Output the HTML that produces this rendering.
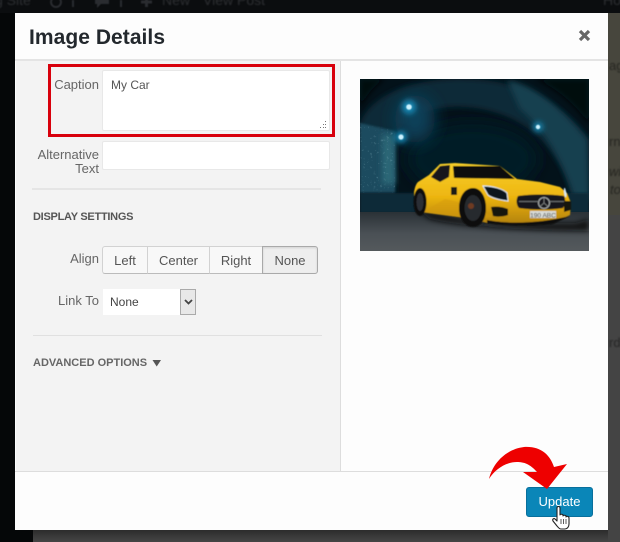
<!DOCTYPE html>
<html><head><meta charset="utf-8"><style>
html,body{margin:0;padding:0;width:620px;height:542px;overflow:hidden;background:#050708}
body{position:relative;font-family:"Liberation Sans",sans-serif;color:#555}
div,span{position:absolute;box-sizing:border-box;white-space:nowrap}
.f{filter:blur(.35px)}
.g{filter:blur(.7px);position:absolute;font-size:14px;line-height:16px;color:#2e3033}
.l{text-align:right;font-size:13px;color:#666;line-height:14px}
.b{top:246px;height:28px;background:#f8f8f8;border:1px solid #d2d2d2;border-bottom-color:#bbb;text-align:center;font-size:13px;line-height:27px;color:#555}
.h{font-size:11px;font-weight:bold;color:#555;line-height:14px}
</style></head><body>
<div style="left:0;top:0;width:620px;height:13px;background:#0b0d0f"></div>
<div class="g" style="left:-5px;top:-8px">g Site</div>
<div class="g" style="left:162px;top:-8px">New</div>
<div class="g" style="left:203px;top:-8px">View Post</div>
<div class="g" style="left:603px;top:-8px">Ho</div>
<svg style="position:absolute;left:48px;top:-3px;filter:blur(.5px)" width="110" height="16"><circle cx="8" cy="5" r="5" fill="none" stroke="#2a2c30" stroke-width="2"/><rect x="24" y="3" width="2" height="7" fill="#2a2c30"/><path d="M47 0h14v7h-8l-4 4v-4h-2z" fill="#2a2c30"/><rect x="72" y="3" width="2" height="7" fill="#2a2c30"/><path d="M93 5h11M98.500 0v10" stroke="#2a2c30" stroke-width="3"/></svg>
<div style="left:33px;top:530px;width:587px;height:12px;background:linear-gradient(#2c2c2c,#454545)"></div>
<div style="left:608px;top:13px;width:12px;height:202px;background:#47463d"></div>
<div style="left:608px;top:215px;width:12px;height:327px;background:#444"></div>
<div class="g" style="left:609px;top:58px;font-size:13px;color:#252520">ag</div>
<div class="g" style="left:609px;top:134px;font-size:13px;color:#252520">rn</div>
<div class="g" style="left:609px;top:164px;font-size:13px;color:#252520;font-style:italic">wil</div>
<div class="g" style="left:610px;top:182px;font-size:13px;color:#252520;font-style:italic">to</div>
<div class="g" style="left:609px;top:335px;font-size:13px;color:#252525">rd</div>

<div style="left:15px;top:13px;width:593px;height:517px;background:#fdfdfd"></div>
<div style="left:16px;top:60px;width:325px;height:411px;background:#f3f3f3"></div>
<div style="left:340px;top:60px;width:1px;height:411px;background:#ddd"></div>
<div style="left:15px;top:59px;width:593px;height:2px;background:#e4e4e4"></div>
<div style="left:15px;top:471px;width:593px;height:1px;background:#ddd"></div>

<div class="f" style="left:29px;top:24px;font-size:21px;line-height:28px;font-weight:bold;color:#23282d;letter-spacing:.05px">Image Details</div>
<svg style="position:absolute;left:578px;top:29px" width="13" height="13" viewBox="0 0 13 13"><path d="M2 2l9 9M11 2l-9 9" stroke="#666" stroke-width="3.200"/></svg>

<div style="left:48px;top:64px;width:287px;height:73px;border:3px solid #d8000c"></div>
<div class="l f" style="left:40px;top:78px;width:59px">Caption</div>
<div style="left:102px;top:70px;width:228px;height:61px;background:#fff;border:1px solid #e8e8e8;border-radius:2px"></div>
<div class="f" style="left:111px;top:78px;font-size:12px;line-height:14px;color:#555">My Car</div>
<svg style="position:absolute;left:318px;top:120px" width="9" height="9"><path d="M7 1h1v1H7zM5 4h1v1H5zM7 4h1v1H7zM2 7h1v1H2zM5 7h1v1H5zM7 7h1v1H7z" fill="#777"/></svg>
<div class="l f" style="left:30px;top:148px;width:69px;line-height:13.500px">Alternative<br>Text</div>
<div style="left:102px;top:141px;width:228px;height:29px;background:#fff;border:1px solid #e8e8e8;border-radius:2px"></div>
<div style="left:32px;top:188px;width:289px;height:2px;background:#e5e5e5"></div>

<div class="h f" style="left:33px;top:210px;letter-spacing:-.27px">DISPLAY SETTINGS</div>
<div class="l f" style="left:50px;top:252px;width:49px">Align</div>
<div class="b f" style="left:102px;width:46px;border-radius:3px 0 0 3px">Left</div>
<div class="b f" style="left:147px;width:63px">Center</div>
<div class="b f" style="left:209px;width:54px">Right</div>
<div class="b f" style="left:262px;width:56px;background:#eee;border-color:#a9a9a9;border-radius:0 3px 3px 0;line-height:28px;box-shadow:inset 0 1px 2px rgba(0,0,0,.12)">None</div>

<div class="l f" style="left:40px;top:294px;width:59px">Link To</div>
<div style="left:103px;top:289px;width:78px;height:26px;background:#fff"></div>
<div class="f" style="left:110px;top:295px;font-size:12px;line-height:14px;color:#444">None</div>
<div style="left:180px;top:289px;width:16px;height:26px;background:#e8e8e8;border:1px solid #aaa"></div>
<svg style="position:absolute;left:184px;top:298px" width="9" height="8"><path d="M1 2l3.500 3.500L8 2" fill="none" stroke="#444" stroke-width="1.800"/></svg>
<div style="left:33px;top:335px;width:289px;height:1px;background:#e0e0e0"></div>
<div class="h f" style="left:33px;top:356px;color:#666">ADVANCED OPTIONS</div>
<svg style="position:absolute;left:152px;top:359px" width="10" height="8"><path d="M.5 1h8.500L4.700 7.500z" fill="#555"/></svg>

<svg style="position:absolute;left:360px;top:79px" width="229" height="172" viewBox="0 0 229 172">
<defs>
<filter id="b05" x="-20%" y="-20%" width="140%" height="140%"><feGaussianBlur stdDeviation=".45"/></filter>
<filter id="b1" x="-50%" y="-50%" width="200%" height="200%"><feGaussianBlur stdDeviation="1"/></filter>
<filter id="b3" x="-50%" y="-50%" width="200%" height="200%"><feGaussianBlur stdDeviation="3"/></filter>
<filter id="b8" x="-50%" y="-50%" width="200%" height="200%"><feGaussianBlur stdDeviation="8"/></filter>
<filter id="n" x="0" y="0" width="100%" height="100%"><feTurbulence baseFrequency=".3" numOctaves="2" seed="3"/><feColorMatrix values="0 0 0 0 .4 0 0 0 0 .66 0 0 0 0 .74 1.300 0 0 0 -.55"/></filter>
<linearGradient id="g" x1="0" y1="0" x2="0" y2="1"><stop offset="0" stop-color="#2a3136"/><stop offset=".55" stop-color="#4a5055"/><stop offset="1" stop-color="#54595c"/></linearGradient>
<linearGradient id="y" x1="0" y1="0" x2="0" y2="1"><stop offset="0" stop-color="#f7cf2a"/><stop offset=".55" stop-color="#eeb611"/><stop offset="1" stop-color="#b5830a"/></linearGradient>
<clipPath id="c"><rect width="229" height="172"/></clipPath>
<clipPath id="w"><path d="M0 44l35 6v64H0z"/></clipPath>
</defs>
<g clip-path="url(#c)">
<rect width="229" height="172" fill="#03121a"/>
<path d="M0 44C10 20 40 3 90 0c50-2 100 10 139 60v60H212C205 85 180 45 130 32 90 22 55 30 35 55v60H0z" fill="#0a2a38" filter="url(#b3)"/>
<path d="M147 1c30 5 60 35 80 60l2 60h-14C205 85 185 50 160 30z" fill="#134050" filter="url(#b3)"/>
<path d="M0 44l35 8v62H0z" fill="#1a4c5e" filter="url(#b1)"/>
<path d="M22 55h13v50H22z" fill="#2a6676" filter="url(#b3)"/>
<ellipse cx="112" cy="80" rx="65" ry="35" fill="#031a25" filter="url(#b8)"/>
<ellipse cx="55" cy="40" rx="20" ry="24" fill="#0b4058" filter="url(#b8)"/>
<path d="M0 0h25C12 8 4 20 0 30zM175 0h54v45C215 25 195 8 175 0z" fill="#010709" filter="url(#b3)"/>
<rect width="229" height="118" filter="url(#n)" clip-path="url(#w)" opacity=".75"/>
<rect y="114" width="229" height="20" fill="#0c2a37" filter="url(#b1)"/>
<rect y="133" width="229" height="39" fill="url(#g)"/>
<path d="M55 130L125 144L215 144L229 140V152C170 152 100 148 70 140z" fill="#080b0e" opacity=".9" filter="url(#b3)"/>
<circle cx="49" cy="28" r="7" fill="#1489b5" filter="url(#b3)"/><circle cx="49" cy="28" r="2.800" fill="#cdf3ff" filter="url(#b05)"/>
<circle cx="41" cy="58" r="6" fill="#1489b5" filter="url(#b3)"/><circle cx="41" cy="58" r="2.600" fill="#cdf3ff" filter="url(#b05)"/>
<circle cx="178" cy="48" r="5" fill="#1489b5" filter="url(#b3)"/><circle cx="178" cy="48" r="2.200" fill="#cdf3ff" filter="url(#b05)"/>
<g filter="url(#b05)">
<path d="M54 113C55 108 56 105 58 103L69 96L80 85L95 84L140 87L157 100L180 103L200 108L207 114L211 124L210 136L193 144L127 144L112 140L60 133C56 128 54 120 54 113Z" fill="url(#y)"/>
<path d="M71 98L80 87L90 86L89 98L80 103Z" fill="#12181c"/>
<path d="M93 87L140 87L155 100L94 99Z" fill="#090d11"/>
<path d="M85 120c15 3 30 8 48 18l-20 2-50-7z" fill="#d49a0a" opacity=".5"/>
<rect x="91" y="108" width="6" height="8" fill="#1a1a14"/>
<ellipse cx="60" cy="123" rx="6.500" ry="14" fill="#0b0c0f"/><ellipse cx="60" cy="123" rx="3.500" ry="9" fill="#2c2f34"/>
<path d="M99 129c0-12 6-20 14-20s13 9 13 20-5 19-13 19-14-8-14-19z" fill="#0a0b0d"/>
<ellipse cx="113" cy="129" rx="8.500" ry="13" fill="#282a2f"/><circle cx="111" cy="127" r="3" fill="#6e3a24"/>
<path d="M123 107C133 107 143 110 147 114L148 122C140 121 132 119 128 116Z" fill="#10171d" stroke="#dfefff" stroke-width=".9"/>
<path d="M158 117c12-2 34-2 46 0 2 3 1 9-1 12-12 2-32 2-44 0-3-3-3-9-1-12z" fill="#15181b"/>
<circle cx="184" cy="124" r="5.500" fill="none" stroke="#a8acac" stroke-width="1.100"/><path d="M184 119v5l-4 3.500M184 124l4 3.500M159 122.500h20M189 122.500h15" stroke="#868a8a" fill="none" stroke-width=".8"/>
<path d="M131 128c6-1 12 0 17 2v6c-5 2-11 2-15 1z" fill="#16150f"/>
<path d="M205 109c1 3 2 6 1 9l-1 0c-1-3-1-6-1-9z" fill="#d4efff"/>
<path d="M204 122h7v9l-7 2z" fill="#14140f"/>
<rect x="170" y="132" width="26" height="7" fill="#d9dcd8"/>
<text x="183" y="138.300" text-anchor="middle" font-size="6.500" font-family="Liberation Sans" fill="#333">190 ABC</text>
<path d="M127 141c20 4 50 4 83-4l-17 8c-20 2-50 2-66-1z" fill="#0a0a08"/>
</g>
</g></svg>

<svg style="position:absolute;left:0;top:0;z-index:3" width="620" height="542">
<path d="M489 479C493 462 507 449 524 447C541 446 550 455 554 467L567 464L547 489L523 472L537 472C530 464 524 462 517 462C506 462 495 469 489 479Z" fill="#ee0000"/>
</svg>
<div style="left:526px;top:487px;width:67px;height:30px;background:#0a86b8;border:1px solid #086f9c;border-radius:3px;text-align:center;color:#fff;font-size:13px;line-height:28px">Update</div>
<svg style="position:absolute;left:551px;top:505px;z-index:4" width="22" height="26" viewBox="0 0 22 26">
<path d="M6 3c0-2 3-2 3 0v7c0-1 3-1 3 0v1c0-1 3-1 3 0v1c0-1 3-1 3 1v6c0 3-2 5-4 5h-4c-2 0-3-2-4-3l-4-5c-1-2 1-3 2-2l2 2z" fill="#fff" stroke="#222" stroke-width="1.100" stroke-linejoin="round"/>
<path d="M10 14v5M12.500 14v5M15 14v5" stroke="#333" stroke-width=".8"/>
</svg>
</body></html>
